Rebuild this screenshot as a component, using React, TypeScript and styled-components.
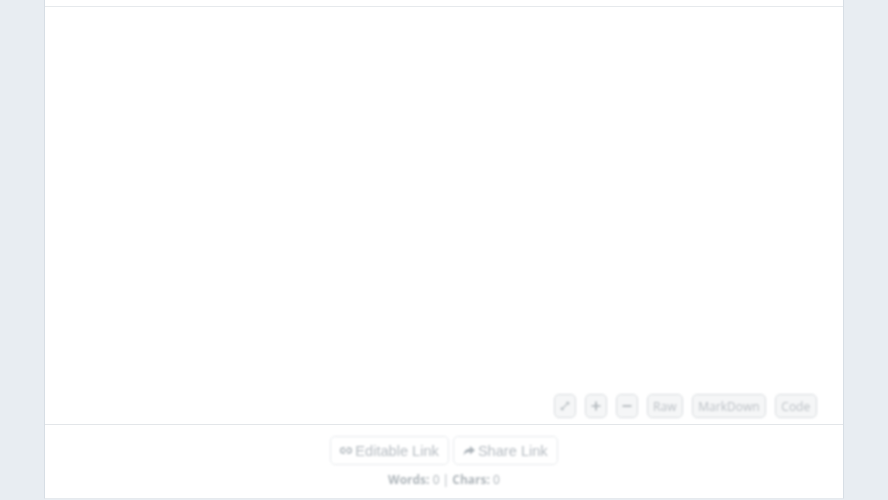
import React from "react";
import styled, { createGlobalStyle } from "styled-components";

const Global = createGlobalStyle`
  html, body { margin: 0; padding: 0; height: 500px; overflow: hidden; background: #e8edf2; }
  #root { height: 500px; }
`;

const Page = styled.div`
  height: 500px;
  padding: 0 44px;
  box-sizing: border-box;
`;

const Card = styled.main`
  height: 499px;
  box-sizing: border-box;
  background: #fff;
  border-left: 1px solid #d7dee5;
  border-right: 1px solid #d7dee5;
  border-bottom: 1px solid #e6eaee;
  display: flex;
  flex-direction: column;
`;

const TopBar = styled.div`
  height: 6px;
  flex: none;
  border-bottom: 1px solid #e6e9ec;
`;

const Editor = styled.section`
  flex: 1;
  display: flex;
  align-items: flex-end;
  justify-content: flex-end;
  padding: 0 26.3px 6px 0;
`;

const Toolbar = styled.div`
  display: flex;
  gap: 8.8px;
  filter: blur(0.8px);
`;

const ToolButton = styled.button<{ $square?: boolean }>`
  height: 24px;
  box-sizing: border-box;
  width: ${(p) => (p.$square ? "22px" : "auto")};
  padding: ${(p) => (p.$square ? "0" : "0 5.5px")};
  display: flex;
  align-items: center;
  justify-content: center;
  background: #f5f6f7;
  border: 1px solid #d8dcdf;
  border-radius: 5px;
  color: #bcc1c6;
  font: 12px "Open Sans", sans-serif;
`;

const Footer = styled.footer`
  height: 74px;
  flex: none;
  box-sizing: border-box;
  border-top: 1px solid #e3e6e9;
  padding-top: 11px;
  display: flex;
  flex-direction: column;
  align-items: center;
`;

const LinkRow = styled.div`
  display: flex;
  gap: 4px;
  height: 29px;
  filter: blur(0.8px);
`;

const LinkButton = styled.button`
  height: 29px;
  box-sizing: border-box;
  padding: 0 9px;
  display: flex;
  align-items: center;
  gap: 3px;
  background: #fff;
  border: 1px solid #e6e9ec;
  border-radius: 5px;
  color: #b6bcc2;
  font: 14.6px "Liberation Sans", Arial, sans-serif;
`;

const Stats = styled.div`
  margin-top: 6px;
  font: 12px/17px "Open Sans", sans-serif;
  color: #afb6bb;
  white-space: pre;
  filter: blur(0.8px);
  b { font-weight: 700; }
`;

const Expand = () => (
  <svg width="10" height="10" viewBox="0 0 10 10" fill="none" stroke="#bcc2c6" strokeWidth="1.3">
    <path d="M2 8 8 2" />
    <path d="M1 9h3L1 6zM9 1H6l3 3z" fill="#bcc2c6" strokeWidth="0.4" />
  </svg>
);

const Plus = () => (
  <svg width="10" height="10" viewBox="0 0 10 10" stroke="#b0b6bb" strokeWidth="1.7">
    <path d="M5 .5v9M.5 5h9" />
  </svg>
);

const Minus = () => (
  <svg width="10" height="10" viewBox="0 0 10 10" stroke="#b0b6bb" strokeWidth="1.7">
    <path d="M.5 5h9" />
  </svg>
);

const LinkIcon = () => (
  <svg width="12" height="7" viewBox="0 0 12 7" fill="none" stroke="#afb6bc" strokeWidth="1.5">
    <path d="M5 1H3a2.5 2.5 0 0 0 0 5h2M7 1h2a2.5 2.5 0 0 1 0 5H7M3.5 3.5h5" />
  </svg>
);

const ShareIcon = () => (
  <svg width="12" height="10" viewBox="0 0 12 10" fill="#adb4ba">
    <path d="M7 0l5 4.3L7 8.6V6C4 6 2 6.8.6 9.5.8 5.5 3 2.8 7 2.5z" />
  </svg>
);

export default function App() {
  return (
    <Page>
      <Global />
      <Card>
        <TopBar />
        <Editor>
          <Toolbar>
            <ToolButton $square><Expand /></ToolButton>
            <ToolButton $square><Plus /></ToolButton>
            <ToolButton $square><Minus /></ToolButton>
            <ToolButton>Raw</ToolButton>
            <ToolButton>MarkDown</ToolButton>
            <ToolButton>Code</ToolButton>
          </Toolbar>
        </Editor>
        <Footer>
          <LinkRow>
            <LinkButton><LinkIcon /> Editable Link</LinkButton>
            <LinkButton><ShareIcon /> Share Link</LinkButton>
          </LinkRow>
          <Stats><b>Words:</b> 0 | <b>Chars:</b> 0</Stats>
        </Footer>
      </Card>
    </Page>
  );
}
